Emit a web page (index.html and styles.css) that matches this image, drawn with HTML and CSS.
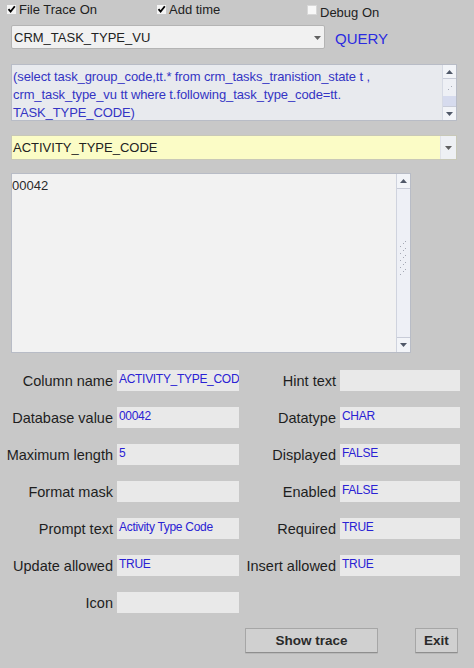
FILE: index.html
```html
<!DOCTYPE html>
<html>
<head>
<meta charset="utf-8">
<link rel="stylesheet" href="styles.css">
</head>
<body>
<div class="app">
  <div class="checks">
    <div class="chk"><span class="box"><svg width="9" height="9" viewBox="0 0 9 9"><path d="M1.5 4.2 L3.6 6.6 L7.8 1.2" fill="none" stroke="#000" stroke-width="1.8"/></svg></span><span>File Trace On</span></div>
    <div class="chk"><span class="box"><svg width="9" height="9" viewBox="0 0 9 9"><path d="M1.5 4.2 L3.6 6.6 L7.8 1.2" fill="none" stroke="#000" stroke-width="1.8"/></svg></span><span>Add time</span></div>
    <div class="chk chk-low"><span class="box box-empty"></span><span>Debug On</span></div>
  </div>

  <div class="main">
    <div class="query-row">
      <div class="select sel-table">
        <span class="sel-text">CRM_TASK_TYPE_VU</span>
        <span class="sel-arrow"><svg width="7" height="4" viewBox="0 0 7 4"><path d="M0 0 H7 L3.5 4 Z" fill="#606060"/></svg></span>
      </div>
      <span class="query">QUERY</span>
    </div>

    <div class="sql">
      <div class="sql-text">(select task_group_code,tt.* from crm_tasks_tranistion_state t ,<br>crm_task_type_vu tt where t.following_task_type_code=tt.<br>TASK_TYPE_CODE)</div>
      <div class="vscroll">
        <div class="sb-btn sb-up"><svg width="7" height="4" viewBox="0 0 7 4"><path d="M0 4 H7 L3.5 0 Z" fill="#505868"/></svg></div>
        <div class="sb-track"><svg width="6" height="6" viewBox="0 0 6 6"><path d="M1 5 L2 4 M4 2 L5 1" stroke="#a8acb8" stroke-width="1"/></svg></div>
        <div class="sb-thumb"></div>
        <div class="sb-btn sb-down"><svg width="7" height="4" viewBox="0 0 7 4"><path d="M0 0 H7 L3.5 4 Z" fill="#505868"/></svg></div>
      </div>
    </div>

    <div class="select sel-col">
      <span class="sel-text">ACTIVITY_TYPE_CODE</span>
      <span class="sel-btn"><svg width="7" height="4" viewBox="0 0 7 4"><path d="M0 0 H7 L3.5 4 Z" fill="#606060"/></svg></span>
    </div>

    <div class="result">
      <div class="result-text">00042</div>
      <div class="vscroll vscroll-big">
        <div class="sb-btn sb-up"><svg width="7" height="4" viewBox="0 0 7 4"><path d="M0 4 H7 L3.5 0 Z" fill="#505868"/></svg></div>
        <div class="sb-track big-track"><svg width="9" height="38" viewBox="0 0 9 38"><g stroke="#a4a8b4" stroke-width="1"><path d="M1 7 L2 6 M4 4 L5 3 M6 2 L7 1"/><path d="M1 14 L2 13 M4 11 L5 10 M6 9 L7 8"/><path d="M1 21 L2 20 M4 18 L5 17 M6 16 L7 15"/><path d="M1 28 L2 27 M4 25 L5 24 M6 23 L7 22"/><path d="M1 35 L2 34 M4 32 L5 31 M6 30 L7 29"/></g></svg></div>
        <div class="sb-btn sb-down"><svg width="7" height="4" viewBox="0 0 7 4"><path d="M0 0 H7 L3.5 4 Z" fill="#505868"/></svg></div>
      </div>
    </div>
  </div>

  <div class="props">
    <div class="lbl">Column name</div><div class="fld">ACTIVITY_TYPE_COD</div>
    <div class="lbl">Hint text</div><div class="fld"></div>

    <div class="lbl">Database value</div><div class="fld">00042</div>
    <div class="lbl">Datatype</div><div class="fld">CHAR</div>

    <div class="lbl">Maximum length</div><div class="fld">5</div>
    <div class="lbl">Displayed</div><div class="fld">FALSE</div>

    <div class="lbl">Format mask</div><div class="fld"></div>
    <div class="lbl">Enabled</div><div class="fld">FALSE</div>

    <div class="lbl">Prompt text</div><div class="fld">Activity Type Code</div>
    <div class="lbl">Required</div><div class="fld">TRUE</div>

    <div class="lbl">Update allowed</div><div class="fld">TRUE</div>
    <div class="lbl">Insert allowed</div><div class="fld">TRUE</div>

    <div class="lbl">Icon</div><div class="fld"></div>
  </div>

  <div class="buttons">
    <button class="btn btn-trace">Show trace</button>
    <button class="btn btn-exit">Exit</button>
  </div>
</div>
</body>
</html>
```

FILE: styles.css
```css
html, body {
  margin: 0;
  padding: 0;
  background: #c8c8c8;
}
body {
  font-family: "Liberation Sans", Arial, sans-serif;
  color: #1c1c1c;
  width: 474px;
  height: 668px;
  overflow: hidden;
}
.app {
  width: 474px;
}

/* checkbox row */
.checks {
  display: flex;
  height: 25px;
  padding-left: 7px;
  box-sizing: border-box;
}
.chk {
  width: 150px;
  display: flex;
  align-items: flex-start;
  font-size: 13px;
  line-height: 15px;
  padding-top: 2px;
  color: #222;
}
.chk-low {
  padding-top: 5px;
}
.box {
  width: 9px;
  height: 9px;
  margin-top: 3px;
  margin-right: 3px;
  background: #f4f4f4;
  display: flex;
}
.chk-low .box {
  margin-top: 0;
  width: 10px;
  height: 10px;
  background: #f8f8f8;
  border: 1px solid #d8d8d8;
  box-sizing: border-box;
}

/* main controls */
.main {
  padding-left: 11px;
}
.query-row {
  display: flex;
  align-items: center;
  height: 24px;
}
.select {
  box-sizing: border-box;
  display: flex;
  align-items: center;
  border: 1px solid #b4b4b4;
  font-size: 13px;
  color: #222;
}
.sel-table {
  width: 314px;
  height: 24px;
  background: #f1f1f1;
  border-radius: 2px;
  padding-left: 2px;
}
.sel-text {
  flex: 1;
  line-height: 15px;
}
.sel-arrow {
  width: 14px;
  display: flex;
  justify-content: center;
  padding-top: 1px;
}
.query {
  margin-left: 10px;
  font-size: 15px;
  color: #2b2be0;
  padding-top: 2px;
}

.sql {
  margin-top: 15px;
  width: 446px;
  height: 57px;
  box-sizing: border-box;
  border: 1px solid #b8bcc6;
  background: #e8eaee;
  display: flex;
}
.sql-text {
  flex: 1;
  font-size: 13px;
  line-height: 18px;
  padding: 3px 0 0 1px;
  color: #3434c4;
  letter-spacing: -0.1px;
  white-space: nowrap;
  overflow: hidden;
}
.vscroll {
  width: 13px;
  display: flex;
  flex-direction: column;
  background: #eef0f6;
  border-left: 1px solid #d6dae4;
}
.sb-btn {
  height: 13px;
  display: flex;
  align-items: center;
  justify-content: center;
  background: #f2f4f8;
}
.sb-up {
  border-bottom: 1px solid #c8ccd8;
}
.sb-track {
  flex: 1;
  display: flex;
  justify-content: center;
  align-items: center;
  background: #eef0f5;
}
.sb-thumb {
  height: 10px;
  background: #d6dbee;
}
.sb-down {
  border-top: 1px solid #c8ccd8;
}

.sel-col {
  margin-top: 14px;
  width: 446px;
  height: 25px;
  background: #fbfcc6;
  border-color: #c8c8b8;
  padding-left: 1px;
}
.sel-btn {
  width: 15px;
  height: 23px;
  display: flex;
  align-items: center;
  justify-content: center;
  background: #eef0f4;
  border-left: 1px solid #e0e2e8;
}

.result {
  margin-top: 13px;
  width: 400px;
  height: 180px;
  box-sizing: border-box;
  border: 1px solid #b8bcc6;
  background: #f2f2f2;
  display: flex;
}
.result-text {
  flex: 1;
  font-size: 13px;
  line-height: 15px;
  padding: 4px 0 0 0;
  color: #2a2a2a;
}
.vscroll-big {
  background: #eef0f6;
  border-left: 1px solid #cfd3de;
}
.vscroll-big .sb-btn {
  height: 14px;
}
.big-track {
  align-items: flex-start;
  padding-top: 51px;
  background: #eef0f6;
}

/* properties grid */
.props {
  margin-top: 17px;
  display: grid;
  grid-template-columns: 113px 122px 93px 120px;
  column-gap: 4px;
  row-gap: 16px;
  grid-auto-rows: 21px;
}
.lbl {
  text-align: right;
  font-size: 14.5px;
  line-height: 19px;
  padding-top: 2px;
  color: #1e1e1e;
  white-space: nowrap;
}
.fld {
  background: #e9e9e9;
  font-size: 12px;
  letter-spacing: -0.3px;
  line-height: 19px;
  padding-left: 2px;
  color: #2a22d4;
  white-space: nowrap;
  overflow: hidden;
}

/* buttons */
.buttons {
  margin-top: 15px;
  display: flex;
  justify-content: flex-end;
  gap: 37px;
  padding-right: 16px;
}
.btn {
  height: 25px;
  box-sizing: border-box;
  background: #d0d0d0;
  border: 1px solid #a6a6a6;
  border-bottom-color: #8e8e8e;
  box-shadow: 0 1px 0 #b8b8b8;
  font-family: "Liberation Sans", Arial, sans-serif;
  font-weight: bold;
  font-size: 13.5px;
  color: #2a2a2a;
  padding: 0;
  border-radius: 1px;
}
.btn-trace {
  width: 133px;
}
.btn-exit {
  width: 43px;
}
```
